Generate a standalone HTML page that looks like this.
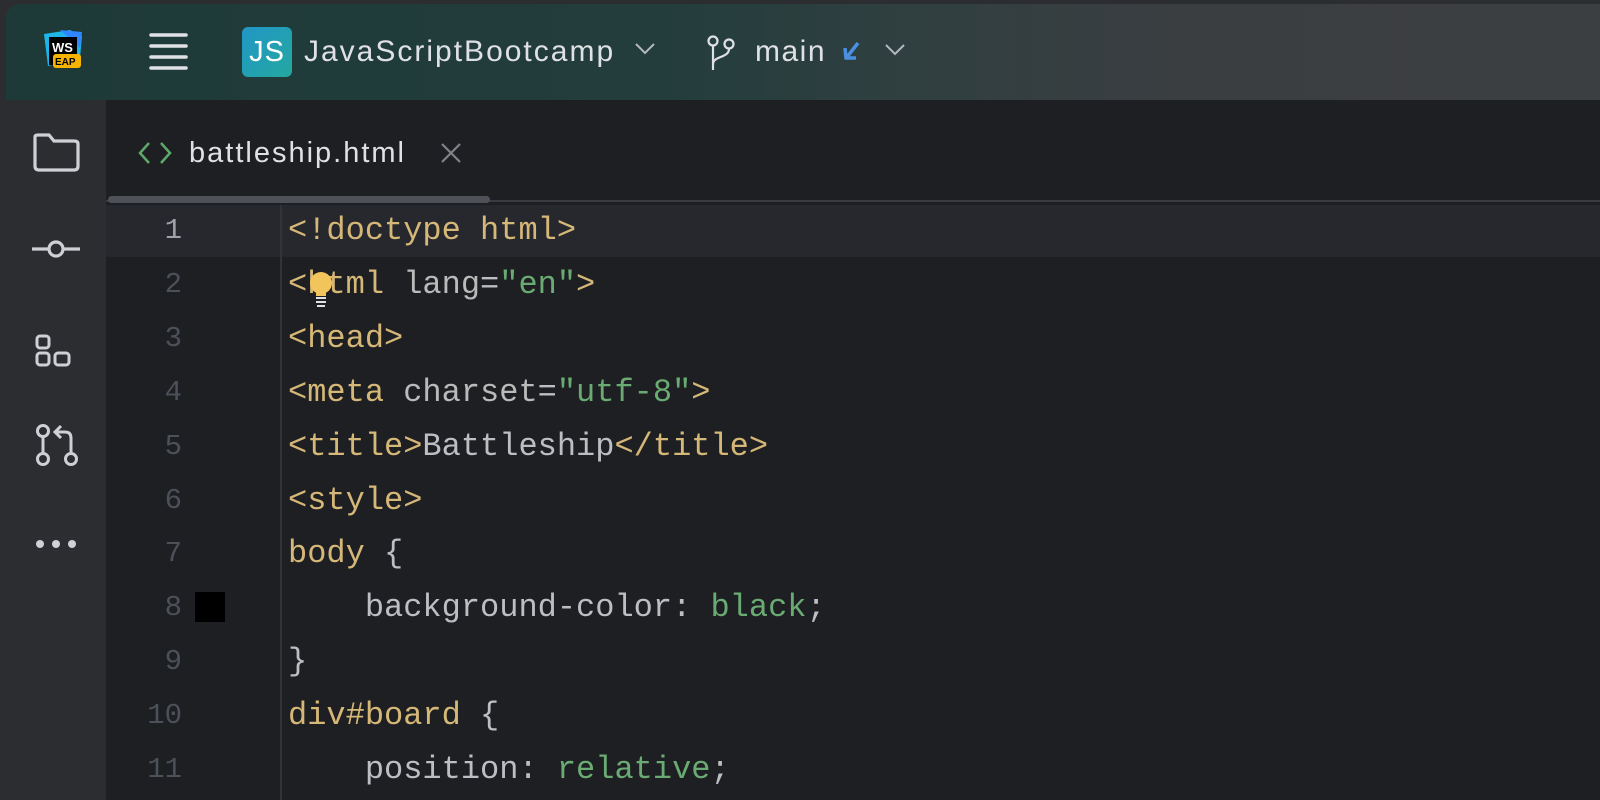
<!DOCTYPE html>
<html><head><style>
*{margin:0;padding:0;box-sizing:border-box}
body{width:1600px;height:800px;overflow:hidden;background:#2b2d30;position:relative;font-family:"Liberation Sans",sans-serif}
.title{position:absolute;left:6px;top:4px;width:1594px;height:96px;background:linear-gradient(90deg,#1e3a38 0%,#223d3c 40%,#2f3f40 55%,#3b3e41 75%,#3c3f41 100%);border-top-left-radius:14px}
.side{position:absolute;left:6px;top:100px;width:100px;height:700px;background:#2b2d30}
.ed{position:absolute;left:106px;top:100px;width:1494px;height:700px;background:#1e1f22}
.t{position:absolute;color:#dfe1e5;white-space:nowrap}
.code{position:absolute;left:288px;top:204px;font-family:"Liberation Mono",monospace;font-size:32px;line-height:53.9px;color:#bcbec4;white-space:pre}
.nums{position:absolute;left:130px;top:204px;width:52px;text-align:right;font-family:"Liberation Mono",monospace;font-size:29px;line-height:53.9px;color:#4b5059;white-space:pre}
.k{color:#d5b778}.s{color:#6aab73}.a{color:#bababa}
</style></head><body>
<div class="title"></div>
<svg style="position:absolute;left:40px;top:28px" width="46" height="46" viewBox="0 0 46 46">
<polygon points="4,6 30,2 42,8 40,30 8,38" fill="#1fb5e8"/>
<polygon points="20,2 42,4 40,20" fill="#2f86ff"/>
<rect x="9" y="9" width="28" height="28" fill="#000"/>
<text x="12" y="24" font-family="Liberation Sans" font-weight="bold" font-size="13" fill="#fff">WS</text>
<rect x="13" y="26" width="28" height="14" rx="3" fill="#f8b400"/>
<text x="15" y="37" font-family="Liberation Sans" font-weight="bold" font-size="10" fill="#000">EAP</text>
</svg>
<svg style="position:absolute;left:148px;top:32px" width="42" height="40"><g stroke="#dfe1e5" stroke-width="3.5" stroke-linecap="round"><line x1="3" y1="3" x2="38" y2="3"/><line x1="3" y1="14" x2="38" y2="14"/><line x1="3" y1="25" x2="38" y2="25"/><line x1="3" y1="36" x2="38" y2="36"/></g></svg>
<div style="position:absolute;left:242px;top:27px;width:50px;height:50px;border-radius:6px;background:linear-gradient(135deg,#2196c6,#24a8a0);color:#fff;font-size:29px;line-height:50px;text-align:center;letter-spacing:1px">JS</div>
<div class="t" style="left:304px;top:35px;font-size:30px;letter-spacing:2px">JavaScriptBootcamp</div>
<svg style="position:absolute;left:634px;top:42px" width="22" height="14"><polyline points="2,2 11,11 20,2" fill="none" stroke="#b4b8bf" stroke-width="2"/></svg>
<svg style="position:absolute;left:706px;top:34px" width="30" height="38"><g fill="none" stroke="#dfe1e5" stroke-width="2.2"><circle cx="7" cy="7" r="4.5"/><circle cx="23" cy="10" r="4.5"/><line x1="7" y1="12" x2="7" y2="36"/><path d="M23 15 C23 24 7 22 7 30"/></g></svg>
<div class="t" style="left:755px;top:35px;font-size:30px;letter-spacing:1.5px">main</div>
<svg style="position:absolute;left:842px;top:40px" width="20" height="22"><g stroke="#4a8fe0" stroke-width="3.5" fill="none"><line x1="16" y1="3" x2="5" y2="17"/><polyline points="3,8 4,18 14,18"/></g></svg>
<svg style="position:absolute;left:884px;top:43px" width="22" height="14"><polyline points="2,2 11,11 20,2" fill="none" stroke="#b4b8bf" stroke-width="2"/></svg>
<div class="side"></div>
<svg style="position:absolute;left:30px;top:130px" width="52" height="44"><path d="M5 7 Q5 5 8 5 H19 L24 11 H44 Q48 11 48 14 V36 Q48 40 44 40 H9 Q5 40 5 36 Z" fill="none" stroke="#ced0d6" stroke-width="3.2"/></svg>
<svg style="position:absolute;left:30px;top:234px" width="52" height="30"><g fill="none" stroke="#ced0d6" stroke-width="3.2"><circle cx="26" cy="15" r="7"/><line x1="2" y1="15" x2="19" y2="15"/><line x1="33" y1="15" x2="50" y2="15"/></g></svg>
<svg style="position:absolute;left:34px;top:333px" width="44" height="38"><g fill="none" stroke="#ced0d6" stroke-width="3"><rect x="3" y="3" width="12" height="12" rx="3"/><rect x="3" y="20" width="12" height="12" rx="3"/><rect x="21" y="20" width="14" height="12" rx="3"/></g></svg>
<svg style="position:absolute;left:32px;top:422px" width="50" height="48"><g fill="none" stroke="#ced0d6" stroke-width="3"><circle cx="11" cy="9" r="5.5"/><circle cx="11" cy="37" r="5.5"/><circle cx="39" cy="37" r="5.5"/><line x1="11" y1="15" x2="11" y2="31"/><path d="M39 31 V16 Q39 10 33 10 H24"/><polyline points="29,4 23,10 29,16"/></g></svg>
<svg style="position:absolute;left:34px;top:536px" width="44" height="16"><g fill="#ced0d6"><circle cx="6" cy="8" r="4"/><circle cx="22" cy="8" r="4"/><circle cx="38" cy="8" r="4"/></g></svg>
<div class="ed"></div>
<svg style="position:absolute;left:138px;top:140px" width="36" height="26"><g fill="none" stroke="#5fa86b" stroke-width="2.5"><polyline points="11,3 2,13 11,23"/><polyline points="23,3 32,13 23,23"/></g></svg>
<div class="t" style="left:189px;top:137px;font-size:29px;letter-spacing:2px;color:#dfe1e5">battleship.html</div>
<svg style="position:absolute;left:440px;top:142px" width="22" height="22"><g stroke="#7f828a" stroke-width="2.2"><line x1="2" y1="2" x2="20" y2="20"/><line x1="20" y1="2" x2="2" y2="20"/></g></svg>
<div style="position:absolute;left:106px;top:200px;width:1494px;height:2px;background:#393b40"></div>
<div style="position:absolute;left:108px;top:196px;width:382px;height:7px;border-radius:4px;background:#4e5157"></div>
<div style="position:absolute;left:106px;top:205px;width:1494px;height:52px;background:#26282e"></div>
<div style="position:absolute;left:280px;top:205px;width:2px;height:595px;background:#313337"></div>
<div class="nums"><span style="color:#a1a3ab">1</span>
2
3
4
5
6
7
8
9
10
11</div>
<div style="position:absolute;left:195px;top:592px;width:30px;height:30px;background:#000"></div>
<div class="code"><span class="k">&lt;!doctype html&gt;</span>
<span class="k">&lt;html</span> <span class="a">lang</span>=<span class="s">"en"</span><span class="k">&gt;</span>
<span class="k">&lt;head&gt;</span>
<span class="k">&lt;meta</span> <span class="a">charset</span>=<span class="s">"utf-8"</span><span class="k">&gt;</span>
<span class="k">&lt;title&gt;</span>Battleship<span class="k">&lt;/title&gt;</span>
<span class="k">&lt;style&gt;</span>
<span class="k">body</span> {
    background-color: <span class="s">black</span>;
}
<span class="k">div#board</span> {
    position: <span class="s">relative</span>;</div>
<svg style="position:absolute;left:308px;top:270px" width="26" height="38"><circle cx="13" cy="13" r="11" fill="#f2c55c"/><rect x="8" y="20" width="10" height="6" fill="#f2c55c"/><g stroke="#dfe1e5" stroke-width="2"><line x1="8" y1="28" x2="18" y2="28"/><line x1="8" y1="32" x2="18" y2="32"/><line x1="9" y1="36" x2="17" y2="36"/></g></svg>
</body></html>
